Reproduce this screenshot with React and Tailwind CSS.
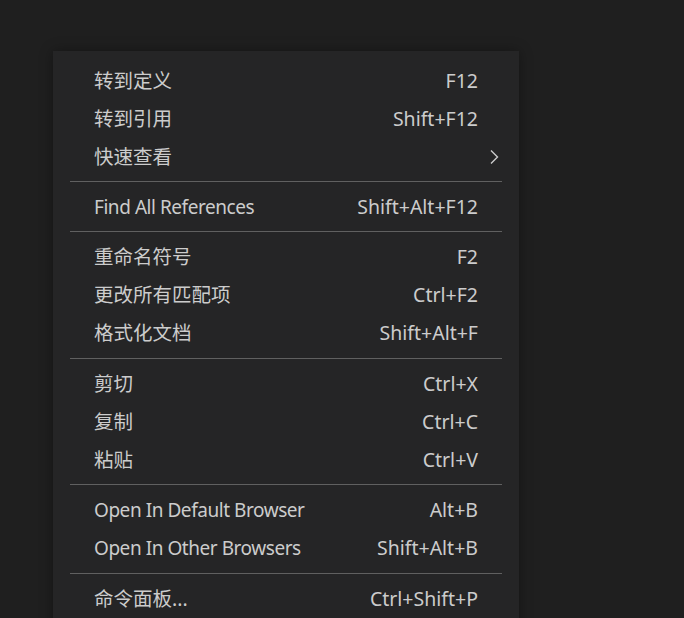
const groups = [
  [
    { label: '转到定义', keys: 'F12' },
    { label: '转到引用', keys: 'Shift+F12' },
    { label: '快速查看', submenu: true },
  ],
  [{ label: 'Find All References', keys: 'Shift+Alt+F12', latin: true }],
  [
    { label: '重命名符号', keys: 'F2' },
    { label: '更改所有匹配项', keys: 'Ctrl+F2' },
    { label: '格式化文档', keys: 'Shift+Alt+F' },
  ],
  [
    { label: '剪切', keys: 'Ctrl+X' },
    { label: '复制', keys: 'Ctrl+C' },
    { label: '粘贴', keys: 'Ctrl+V' },
  ],
  [
    { label: 'Open In Default Browser', keys: 'Alt+B', latin: true },
    { label: 'Open In Other Browsers', keys: 'Shift+Alt+B', latin: true },
  ],
  [{ label: '命令面板...', keys: 'Ctrl+Shift+P' }],
];

const sepHeights = ['h-[12px] pt-[5px]', 'h-[12px] pt-[5px]', 'h-[13px] pt-[6px]', 'h-[12px] pt-[5px]', 'h-[13px] pt-[6px]'];

const MenuItem = ({ item }) => (
  <div className="flex items-center h-[38px] pl-[41px] pr-[41px] cursor-default">
    <span
      className={`flex-1 whitespace-nowrap ${item.latin ? 'text-[19px] tracking-[-0.45px]' : ''}`}
    >
      {item.label}
    </span>
    {item.keys && <span className="whitespace-nowrap">{item.keys}</span>}
    {item.submenu && (
      <svg width="11" height="16" viewBox="0 0 11 16" className="-mr-[22px]" fill="none">
        <path d="M2 1.5l6.5 6.5-6.5 6.5" stroke="#cccccc" strokeWidth="1.4" />
      </svg>
    )}
  </div>
);

export default function App() {
  return (
    <div
      className="w-[684px] h-[618px] overflow-hidden bg-[#1f1f1f] pt-[51px] pl-[53px]"
      style={{ fontFamily: '"Noto Sans", "Noto Sans CJK SC", sans-serif' }}
    >
      <div className="w-[466px] h-[600px] bg-[#252526] pt-[11px] text-[#cccccc] text-[19.5px] shadow-[0_0_12px_rgba(0,0,0,0.35)]">
        {groups.map((group, gi) => (
          <div key={gi}>
            {gi > 0 && (
              <div className={sepHeights[gi - 1]}>
                <div className="mx-[17px] h-px bg-[#606060]" />
              </div>
            )}
            {group.map((item) => (
              <MenuItem key={item.label} item={item} />
            ))}
          </div>
        ))}
      </div>
    </div>
  );
}
